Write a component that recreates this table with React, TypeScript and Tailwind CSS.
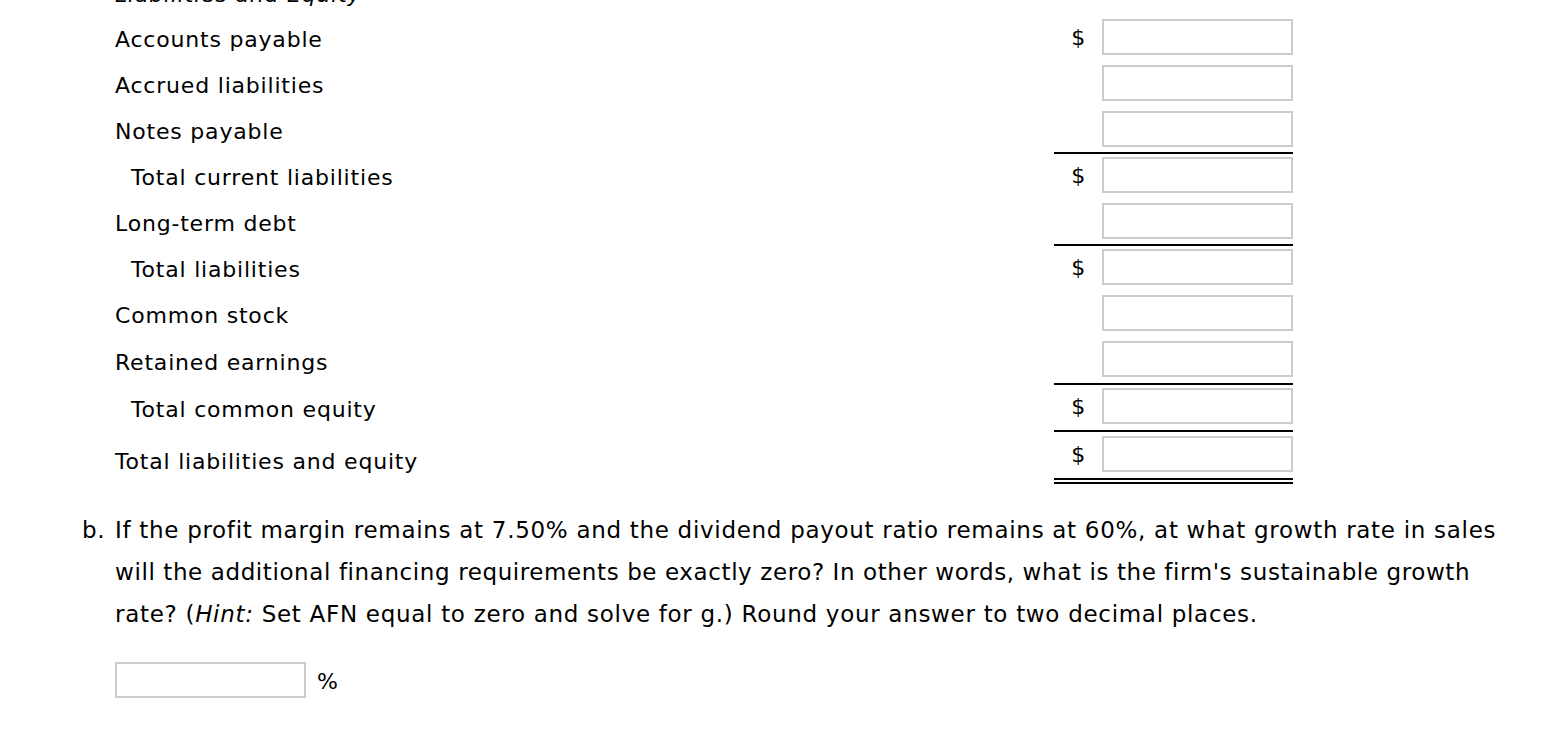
import React from "react";

type Row = {
  label: string;
  indent?: boolean;
  dollar?: boolean;
  total?: boolean;
  last?: boolean;
  extra?: boolean;
};

const rows: Row[] = [
  { label: "Accounts payable", dollar: true },
  { label: "Accrued liabilities" },
  { label: "Notes payable" },
  { label: "Total current liabilities", indent: true, dollar: true, total: true },
  { label: "Long-term debt" },
  { label: "Total liabilities", indent: true, dollar: true, total: true },
  { label: "Common stock" },
  { label: "Retained earnings", extra: true },
  { label: "Total common equity", indent: true, dollar: true, total: true, extra: true },
  { label: "Total liabilities and equity", dollar: true, total: true, last: true },
];

function AmountBox() {
  return <div className="w-[191px] h-[36px] border-2 border-[#cccccc] bg-white" />;
}

export default function App() {
  return (
    <div className="min-h-screen bg-white text-black font-['DejaVu_Sans',Verdana,sans-serif] overflow-hidden">
      {/* balance sheet table */}
      <div className="-mt-[32px] pl-[115px] w-[1293px] text-[22px] tracking-[0.8px]">
        <div className="h-[46px] pt-[7px] flex items-center italic">Liabilities and Equity</div>
        {rows.map((r) => (
          <div key={r.label} className="flex">
            <div
              className={`flex-1 flex items-center ${r.last ? "pt-[8px]" : r.extra ? "pt-[5px]" : "pt-[4px]"} ${
                r.indent ? "pl-[16px]" : ""
              }`}
            >
              {r.label}
            </div>
            <div
              className={`w-[239px] flex ${
                r.total ? "border-t-2 border-black" : ""
              } ${r.last ? "pt-[4px]" : r.total ? "pt-[3px]" : "pt-[5px]"} ${
                r.last ? "border-b-[6px] border-double pb-[6px]" : r.extra ? "pb-[6px]" : "pb-[5px]"
              }`}
            >
              <div className="w-[48px] flex items-center justify-end pr-[16px]">
                {r.dollar ? "$" : ""}
              </div>
              <AmountBox />
            </div>
          </div>
        ))}
      </div>

      {/* part b */}
      <div className="mt-[25px] pl-[82px] flex leading-[42px] text-[23px] tracking-[0.7px]">
        <div className="w-[33px] shrink-0">b.</div>
        <p className="whitespace-nowrap">
          If the profit margin remains at 7.50% and the dividend payout ratio remains at 60%, at what growth rate in sales
          <br />
          <span className="tracking-[0.6px]">
            will the additional financing requirements be exactly zero? In other words, what is the firm's sustainable
            growth
          </span>
          <br />
          rate? (<i>Hint:</i> Set AFN equal to zero and solve for g.) Round your answer to two decimal places.
        </p>
      </div>

      <div className="mt-[27px] pl-[115px] flex items-center gap-[11px] text-[22px]">
        <AmountBox />
        <span className="pt-[2px]">%</span>
      </div>
    </div>
  );
}
